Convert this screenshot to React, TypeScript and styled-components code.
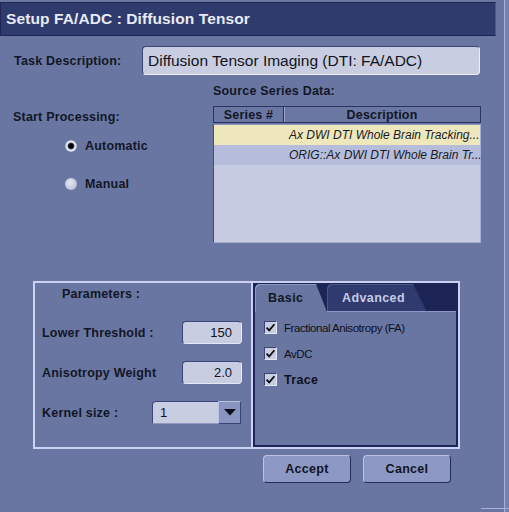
import React from 'react';
import styled, { createGlobalStyle } from 'styled-components';

const Global = createGlobalStyle`
  html, body { margin: 0; padding: 0; background: #6a76a2; }
  body { width: 509px; height: 512px; overflow: hidden; font-family: "Liberation Sans", Arial, sans-serif; }
`;

const Screen = styled.div`
  position: relative;
  width: 509px;
  height: 512px;
  display: flex;
  overflow: hidden;
  background: #7581af;
  &::after {
    content: '';
    position: absolute;
    left: 481px;
    top: 508px;
    width: 28px;
    height: 1px;
    background: #a9b0d9;
  }
`;

const Dialog = styled.div`
  width: 505px;
  height: 512px;
  box-sizing: border-box;
  border-right: 1px solid #a9b0d9;
  background: #6a76a2;
  display: flex;
  flex-direction: column;
`;

const TitleBar = styled.div`
  margin-top: 2px;
  width: 496px;
  height: 34px;
  flex: none;
  box-sizing: border-box;
  background: #2f3b6d;
  border: 1px solid #1d2653;
  border-right-color: #4a5690;
  display: flex;
  align-items: center;
  padding-left: 5px;
  color: #e8ebf7;
  font-size: 15.5px;
  font-weight: 700;
  letter-spacing: 0.1px;
`;

const Label = styled.div`
  font-size: 12.5px;
  font-weight: 700;
  letter-spacing: 0.2px;
  color: #121626;
  line-height: 14px;
  white-space: nowrap;
`;

const TaskRow = styled.div`
  display: flex;
  align-items: center;
  margin-top: 10px;
  padding-left: 14px;
  height: 29px;
`;

const TaskLabel = styled(Label)`
  width: 128px;
`;

const TextField = styled.div`
  width: 338px;
  height: 29px;
  box-sizing: border-box;
  border-radius: 4px;
  background: #c9cde1;
  border: 1px solid;
  border-color: #3b4576 #eceef8 #eceef8 #3b4576;
  display: flex;
  align-items: center;
  padding-left: 5px;
  font-size: 15.5px;
  color: #111320;
  white-space: nowrap;
`;

const Middle = styled.div`
  display: flex;
`;

const LeftCol = styled.div`
  width: 213px;
  box-sizing: border-box;
  padding: 35px 0 0 13px;
  display: flex;
  flex-direction: column;
`;

const RadioGroup = styled.div`
  display: flex;
  flex-direction: column;
  gap: 22px;
  margin-top: 14px;
  padding-left: 52px;
`;

const RadioRow = styled.div`
  display: flex;
  align-items: center;
  gap: 8px;
  height: 16px;
`;

const RadioDot = styled.span<{ $on?: boolean }>`
  width: 12px;
  height: 12px;
  flex: none;
  border-radius: 50%;
  background: ${(p) =>
    p.$on
      ? 'radial-gradient(circle at 50% 50%, #06070c 0 2.2px, #3a3e52 2.9px, #eceef6 3.9px, #d6d9e6 5.2px, #9ea3bd 6px)'
      : 'radial-gradient(circle at 42% 38%, #e4e6f2 0, #cdd0e3 45%, #b3b8d2 85%, #9aa0bf 100%)'};
`;

const RightCol = styled.div`
  width: 268px;
  padding-top: 9px;
  display: flex;
  flex-direction: column;
  gap: 8px;
`;

const Table = styled.div`
  width: 268px;
  height: 137px;
  display: flex;
  flex-direction: column;
`;

const HeadRow = styled.div`
  display: grid;
  grid-template-columns: 70px 1fr;
  height: 17px;
  flex: none;
  box-sizing: border-box;
  border: 1px solid #2b3362;
  background: #6b77a3;
`;

const HeadCell = styled(Label)<{ $divider?: boolean }>`
  display: flex;
  align-items: center;
  justify-content: center;
  border-right: ${(p) => (p.$divider ? '1px solid #2b3362' : 'none')};
  box-shadow: ${(p) => (p.$divider ? '1px 0 0 #9ba3cc' : 'none')};
`;

const TableBody = styled.div`
  flex: 1;
  margin-top: 1px;
  box-sizing: border-box;
  background: #c7cbe1;
  border: 1px solid #a8afd3;
  border-left-color: #434d7c;
  border-top-color: #8a93bf;
`;

const DataRow = styled.div<{ $sel?: boolean }>`
  display: grid;
  grid-template-columns: 69px 1fr;
  height: 20px;
  align-items: center;
  background: ${(p) => (p.$sel ? '#efe7bc' : '#b5bddb')};
  font-style: italic;
  font-size: 12px;
  color: #181a28;
`;

const DescCell = styled.div`
  padding-left: 6px;
  white-space: nowrap;
`;

const Group = styled.div`
  margin: 38px 0 0 33px;
  width: 427px;
  height: 168px;
  box-sizing: border-box;
  border: 2px solid #cdd1f4;
  display: flex;
`;

const Params = styled.div`
  width: 216px;
  box-sizing: border-box;
  padding: 4px 9px 0 7px;
  display: flex;
  flex-direction: column;
`;

const ParamsTitle = styled(Label)`
  margin-left: 20px;
  margin-bottom: 20px;
`;

const ParamList = styled.div`
  display: flex;
  flex-direction: column;
  gap: 17px;
`;

const ParamRow = styled.div`
  display: flex;
  align-items: center;
  justify-content: space-between;
  height: 23px;
`;

const NumField = styled.div`
  width: 60px;
  height: 23px;
  box-sizing: border-box;
  border-radius: 4px;
  background: #c9cde1;
  border: 1px solid;
  border-color: #3b4576 #e4e7f4 #e4e7f4 #3b4576;
  display: flex;
  align-items: center;
  justify-content: flex-end;
  padding-right: 9px;
  font-size: 13px;
  color: #111320;
`;

const Select = styled.div`
  width: 89px;
  height: 23px;
  margin-right: 1px;
  display: flex;
`;

const SelectValue = styled.div`
  flex: 1;
  box-sizing: border-box;
  background: #c9cde1;
  border-top-left-radius: 4px;
  border-top: 1px solid #3b4576;
  border-left: 1px solid #3b4576;
  border-bottom: 1px solid #8e97c2;
  display: flex;
  align-items: center;
  padding-left: 7px;
  font-size: 13px;
  color: #111320;
`;

const SelectButton = styled.div`
  width: 23px;
  box-sizing: border-box;
  background: #8a94c0;
  border: 1px solid;
  border-color: #b9c0e0 #3a4474 #3a4474 #b9c0e0;
  display: flex;
  align-items: center;
  justify-content: center;
`;

const TabPanel = styled.div`
  flex: 1;
  box-sizing: border-box;
  border-left: 2px solid #cdd1f4;
  background: #1c2555;
  padding: 0 2px 2px 2px;
  display: flex;
  flex-direction: column;
`;

const TabHeader = styled.div`
  height: 29px;
  flex: none;
  display: flex;
  align-items: flex-end;
`;

const Tab = styled.div<{ $active?: boolean; $w: number; $top: number }>`
  width: ${(p) => p.$w}px;
  height: 28px;
  box-sizing: border-box;
  flex: none;
  border-top-left-radius: 5px;
  clip-path: polygon(0 0, ${(p) => p.$top}px 0, 100% 100%, 0 100%);
  background: ${(p) => (p.$active ? '#6a76a2' : '#2f3a6e')};
  box-shadow: inset 1px 1px 0 ${(p) => (p.$active ? '#8e98c6' : '#4a5588')};
  border-bottom: ${(p) => (p.$active ? 'none' : '1px solid #8e97c6')};
  display: flex;
  align-items: center;
  padding-left: ${(p) => (p.$active ? 13 : 15)}px;
  font-size: 12.5px;
  font-weight: 700;
  letter-spacing: 0.4px;
  color: ${(p) => (p.$active ? '#121626' : '#c6cbe6')};
`;

const TabFiller = styled.div`
  flex: 1;
  height: 1px;
  background: #8e97c6;
`;

const TabContent = styled.div`
  flex: 1;
  background: #6a76a2;
  padding: 9px 0 0 9px;
  display: flex;
  flex-direction: column;
  gap: 13px;
`;

const CheckRow = styled.div`
  display: flex;
  align-items: center;
  gap: 7px;
  height: 13px;
`;

const CheckBox = styled.span`
  width: 13px;
  height: 13px;
  flex: none;
  box-sizing: border-box;
  background: #c9cde1;
  border: 1px solid;
  border-color: #3b4576 #e4e7f4 #e4e7f4 #3b4576;
  display: flex;
  align-items: center;
  justify-content: center;
`;

const CheckText = styled.span<{ $bold?: boolean }>`
  font-size: ${(p) => (p.$bold ? 12.5 : 11.5)}px;
  font-weight: ${(p) => (p.$bold ? 700 : 400)};
  letter-spacing: ${(p) => (p.$bold ? '0.3px' : '-0.45px')};
  color: #0e1020;
  white-space: nowrap;
`;

const ButtonRow = styled.div`
  display: flex;
  gap: 12px;
  margin-top: 6px;
  padding-left: 263px;
`;

const Button = styled.div`
  width: 88px;
  height: 28px;
  box-sizing: border-box;
  border-radius: 4px;
  background: #8e98c4;
  border: 1px solid;
  border-color: #bcc3e4 #252d5c #252d5c #bcc3e4;
  display: flex;
  align-items: center;
  justify-content: center;
  font-size: 12.5px;
  font-weight: 700;
  letter-spacing: 0.3px;
  color: #101426;
`;

const Check = () => (
  <svg width="11" height="11" viewBox="0 0 11 11">
    <path d="M1.6 5.6 L4.2 8.4 L9.4 2.2" fill="none" stroke="#06070c" strokeWidth="1.7" />
  </svg>
);

const Arrow = () => (
  <svg width="12" height="7" viewBox="0 0 12 7">
    <path d="M0 0 H12 L6 6.5 Z" fill="#0c0e18" />
  </svg>
);

export default function App() {
  return (
    <>
      <Global />
      <Screen>
        <Dialog>
          <TitleBar>Setup FA/ADC : Diffusion Tensor</TitleBar>
          <TaskRow>
            <TaskLabel>Task Description:</TaskLabel>
            <TextField>Diffusion Tensor Imaging (DTI: FA/ADC)</TextField>
          </TaskRow>
          <Middle>
            <LeftCol>
              <Label>Start Processing:</Label>
              <RadioGroup>
                <RadioRow>
                  <RadioDot $on />
                  <Label>Automatic</Label>
                </RadioRow>
                <RadioRow>
                  <RadioDot />
                  <Label>Manual</Label>
                </RadioRow>
              </RadioGroup>
            </LeftCol>
            <RightCol>
              <Label>Source Series Data:</Label>
              <Table>
                <HeadRow>
                  <HeadCell $divider>Series #</HeadCell>
                  <HeadCell>Description</HeadCell>
                </HeadRow>
                <TableBody>
                  <DataRow $sel>
                    <span />
                    <DescCell>Ax DWI DTI Whole Brain Tracking...</DescCell>
                  </DataRow>
                  <DataRow>
                    <span />
                    <DescCell>ORIG::Ax DWI DTI Whole Brain Tr...</DescCell>
                  </DataRow>
                </TableBody>
              </Table>
            </RightCol>
          </Middle>
          <Group>
            <Params>
              <ParamsTitle>Parameters :</ParamsTitle>
              <ParamList>
                <ParamRow>
                  <Label>Lower Threshold :</Label>
                  <NumField>150</NumField>
                </ParamRow>
                <ParamRow>
                  <Label>Anisotropy Weight</Label>
                  <NumField>2.0</NumField>
                </ParamRow>
                <ParamRow>
                  <Label>Kernel size :</Label>
                  <Select>
                    <SelectValue>1</SelectValue>
                    <SelectButton>
                      <Arrow />
                    </SelectButton>
                  </Select>
                </ParamRow>
              </ParamList>
            </Params>
            <TabPanel>
              <TabHeader>
                <Tab $active $w={72} $top={61}>Basic</Tab>
                <Tab $w={100} $top={86}>Advanced</Tab>
                <TabFiller />
              </TabHeader>
              <TabContent>
                <CheckRow>
                  <CheckBox><Check /></CheckBox>
                  <CheckText>Fractional Anisotropy (FA)</CheckText>
                </CheckRow>
                <CheckRow>
                  <CheckBox><Check /></CheckBox>
                  <CheckText>AvDC</CheckText>
                </CheckRow>
                <CheckRow>
                  <CheckBox><Check /></CheckBox>
                  <CheckText $bold>Trace</CheckText>
                </CheckRow>
              </TabContent>
            </TabPanel>
          </Group>
          <ButtonRow>
            <Button>Accept</Button>
            <Button>Cancel</Button>
          </ButtonRow>
        </Dialog>
      </Screen>
    </>
  );
}
